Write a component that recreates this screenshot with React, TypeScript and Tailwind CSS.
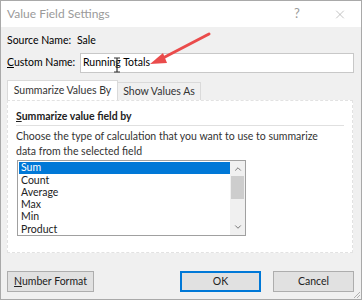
import { ChevronUp, ChevronDown, X } from "lucide-react"

const items = ["Sum", "Count", "Average", "Max", "Min", "Product"]

export default function App() {
  return (
    <div className="relative w-[362px] h-[300px] overflow-hidden whitespace-nowrap border border-[#a9a9a9] bg-[#f0f0f0] font-['Lato',sans-serif] text-[10.5px] text-black">
      {/* title bar */}
      <div className="flex h-[26px] items-center bg-white pl-[6px] text-[12px] text-[#9a9a9a]">
        <span>Value Field Settings</span>
        <span className="ml-auto w-[12px] text-center text-[13px]">?</span>
        <span className="ml-[30px] mr-[14px] flex w-[14px] items-center justify-center">
          <X className="h-[15px] w-[15px]" strokeWidth={1} />
        </span>
      </div>

      <div className="px-[6px]">
        <div className="mt-[4px] flex h-[20px] items-center">
          <span className="w-[70px]">Source Name:</span>
          <span>Sale</span>
        </div>
        <div className="mt-[2px] flex h-[20px] items-center">
          <span className="w-[73px]">
            <span className="underline">C</span>ustom Name:
          </span>
          <div className="mr-[1px] flex h-[20px] flex-1 items-center border border-[#c8c8c8] bg-white pl-[2px]">
            Running Totals
          </div>
        </div>

        {/* tabs */}
        <div className="mt-[7px] flex h-[20px] items-end">
          <div className="relative z-10 flex h-[20px] w-[111px] items-center justify-center border border-b-0 border-[#dadada] bg-white text-[10.5px] text-[#333]">
            Summarize Values By
          </div>
          <div className="flex h-[18px] w-[83px] items-center justify-center border border-b-0 border-l-0 border-[#dadada] bg-[#f0f0f0] text-[10.5px] text-[#333]">
            Show Values As
          </div>
        </div>
        <div className="h-[153px] w-[346px] border border-dashed border-[#e2e2e2] bg-white px-[8px]">
          <div className="mt-[8px] flex h-[17px] items-center border-b border-[#e0e0e0] font-bold text-[#222]">
            <span>
              <span className="underline">S</span>ummarize value field by
            </span>
          </div>
          <div className="mt-[3px] leading-[15px] text-[#333]">
            Choose the type of calculation that you want to use to summarize
            <br />
            data from the selected field
          </div>
          <div className="ml-[1px] mt-[1px] flex h-[76px] w-[229px] border border-[#a0a0a0] bg-white">
            <div className="flex-1 pl-[1px] pt-[1px]">
              {items.map((it, i) => (
                <div
                  key={it}
                  className={
                    i === 0
                      ? "flex h-[12.3px] items-center bg-[#0078d7] pl-[2px] text-white"
                      : "flex h-[12.3px] items-center pl-[2px] text-[#222]"
                  }
                >
                  {it}
                </div>
              ))}
            </div>
            <div className="flex w-[15px] flex-col items-center bg-[#f0f0f0]">
              <ChevronUp className="mt-[3px] h-[10px] w-[10px] text-[#606060]" strokeWidth={2} />
              <div className="mt-[2px] h-[23px] w-[13px] bg-[#cdcdcd]" />
              <ChevronDown className="mb-[3px] mt-auto h-[10px] w-[10px] text-[#606060]" strokeWidth={2} />
            </div>
          </div>
        </div>

        {/* buttons */}
        <div className="mt-[18px] flex h-[21px]">
          <button className="h-[21px] w-[87px] border border-[#adadad] bg-[#e1e1e1] text-[#222]">
            <span className="underline">N</span>umber Format
          </button>
          <button className="ml-auto h-[21px] w-[81px] border-2 border-[#0078d7] bg-[#e1e1e1] text-[#222]">
            OK
          </button>
          <button className="ml-[12px] mr-[1px] h-[21px] w-[81px] border border-[#adadad] bg-[#e1e1e1] text-[#222]">
            Cancel
          </button>
        </div>
      </div>

      {/* red annotation arrow */}
      <svg className="absolute left-0 top-0" width="362" height="300" viewBox="0 0 362 300">
        <line x1="208" y1="33" x2="160" y2="58" stroke="#ea4b4b" strokeWidth="3" strokeLinecap="round" />
        <polygon points="149,63 162,52 166,62" fill="#ea4b4b" />
      </svg>
      {/* text cursor */}
      <svg className="absolute left-[112px] top-[56px]" width="8" height="16" viewBox="0 0 8 16">
        <path d="M1 1h6M4 1v14M1 15h6" stroke="#333" strokeWidth="1.2" fill="none" />
      </svg>
      {/* resize grip */}
      <svg className="absolute bottom-0 right-0" width="10" height="10" viewBox="0 0 10 10">
        <path d="M9 3L3 9M9 6L6 9" stroke="#b0b0b0" strokeWidth="1" />
      </svg>
    </div>
  )
}
